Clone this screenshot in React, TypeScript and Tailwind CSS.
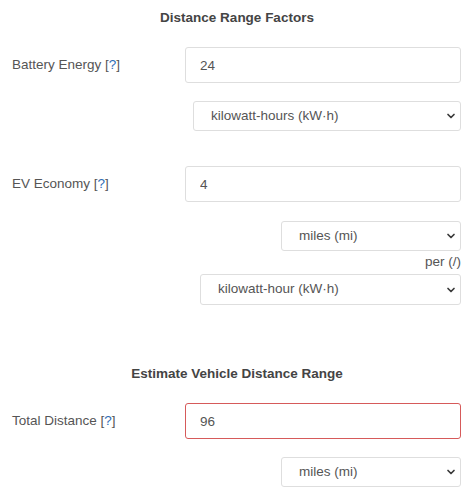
import React from "react";

const font = { fontFamily: '"Liberation Sans", Arial, sans-serif' };

function Chevron() {
  return (
    <svg
      className="pointer-events-none absolute right-[5px] top-1/2 -translate-y-1/2"
      width="10"
      height="10"
      viewBox="0 0 10 10"
    >
      <path d="M2 3.5 L5 6.5 L8 3.5" fill="none" stroke="#3a3a3a" strokeWidth="1.7" strokeLinecap="round" strokeLinejoin="round" />
    </svg>
  );
}

function Select({ value, options, widthClass, heightClass }: { value: string; options: string[]; widthClass: string; heightClass: string }) {
  return (
    <div className={`relative ${widthClass} ${heightClass}`}>
      <select
        defaultValue={value}
        className="appearance-none w-full h-full border border-[#dedede] rounded-[3px] bg-white pl-[17px] pr-[20px] text-[13.5px] text-[#555] outline-none"
        style={font}
      >
        {options.map((o) => (
          <option key={o}>{o}</option>
        ))}
      </select>
      <Chevron />
    </div>
  );
}

function Label({ text }: { text: string }) {
  return (
    <div className="w-[173px] shrink-0 text-[13.5px] text-[#555]">
      {text} [<a className="text-[#2f6db5]">?</a>]
    </div>
  );
}

function Input({ value, red }: { value: string; red?: boolean }) {
  return (
    <input
      defaultValue={value}
      className={`flex-1 min-w-0 h-[36px] rounded-[3px] bg-white pl-[14px] text-[13.5px] text-[#555] outline-none border ${red ? "border-[#d65a5a]" : "border-[#dedede]"}`}
      style={font}
    />
  );
}

export default function App() {
  return (
    <div className="w-[474px] h-[501px] bg-white overflow-hidden pl-[12px] pr-[13px]" style={font}>
      <div className="pt-[8px] h-[28px] leading-[20px] text-center font-bold text-[13.5px] text-[#444] pl-[1px]">
        Distance Range Factors
      </div>
      <div className="mt-[19px] flex items-center">
        <Label text="Battery Energy" />
        <Input value="24" />
      </div>
      <div className="mt-[18px] flex justify-end">
        <Select value="kilowatt-hours (kW·h)" options={["kilowatt-hours (kW·h)"]} widthClass="w-[268px]" heightClass="h-[30px]" />
      </div>
      <div className="mt-[35px] flex items-center">
        <Label text="EV Economy" />
        <Input value="4" />
      </div>
      <div className="mt-[19px] flex justify-end">
        <Select value="miles (mi)" options={["miles (mi)"]} widthClass="w-[180px]" heightClass="h-[30px]" />
      </div>
      <div className="h-[23px] flex items-center justify-end text-[13.5px] text-[#555]">per (/)</div>
      <div className="flex justify-end">
        <Select value="kilowatt-hour (kW·h)" options={["kilowatt-hour (kW·h)"]} widthClass="w-[261px]" heightClass="h-[31px]" />
      </div>
      <div className="mt-[59px] h-[20px] leading-[20px] text-center font-bold text-[13.5px] text-[#444] pl-[1px]">
        Estimate Vehicle Distance Range
      </div>
      <div className="mt-[19px] flex items-center">
        <Label text="Total Distance" />
        <Input value="96" red />
      </div>
      <div className="mt-[18px] flex justify-end">
        <Select value="miles (mi)" options={["miles (mi)"]} widthClass="w-[180px]" heightClass="h-[30px]" />
      </div>
    </div>
  );
}
